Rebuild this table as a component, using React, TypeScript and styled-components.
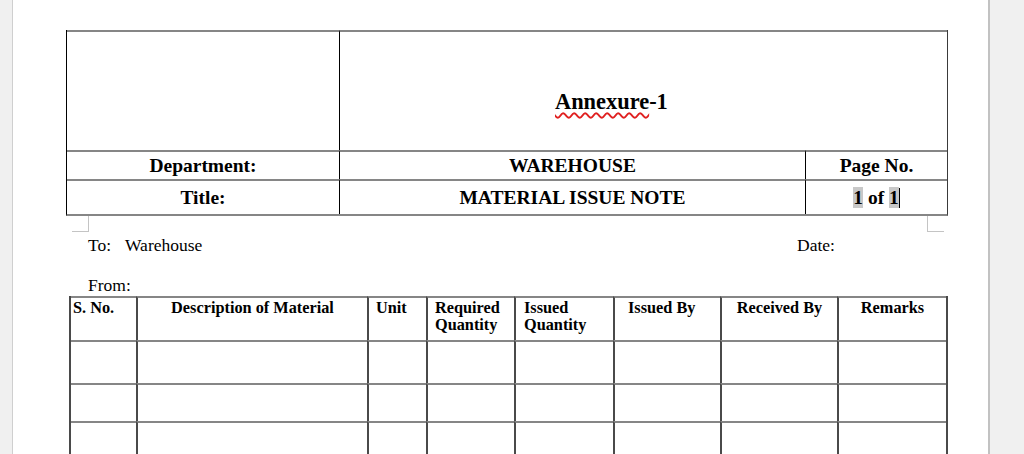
import React from "react";
import styled, { createGlobalStyle } from "styled-components";

const GlobalStyle = createGlobalStyle`
  html, body { margin: 0; padding: 0; height: 100%; overflow: hidden; background: #f0f0f0; }
  #root { height: 100%; }
`;

const Viewport = styled.div`
  display: flex;
  height: 454px;
  background: #f0f0f0;
  font-family: "Liberation Serif", "Times New Roman", serif;
  color: #000;
`;

const Page = styled.div`
  margin-left: 12px;
  width: 978px;
  box-sizing: border-box;
  border-left: 1px solid #cfcfcf;
  border-right: 2px solid #c2c2c2;
  background: #fff;
  padding-top: 30px;
  overflow: hidden;
  display: flex;
  flex-direction: column;
`;

const HeaderGrid = styled.div`
  margin-left: 53px;
  width: 882px;
  box-sizing: border-box;
  display: grid;
  grid-template-columns: 272px 466px 142px;
  grid-template-rows: 120px 29px 35px;
  border-left: 1px solid #000;
  border-right: 1px solid #3a3a3a;
  border-bottom: 2px solid #868686;
`;

const HeadCell = styled.div<{ $first?: boolean; $span?: number }>`
  box-sizing: border-box;
  grid-column: span ${(p) => p.$span ?? 1};
  border-top: 2px solid #868686;
  border-left: ${(p) => (p.$first ? "none" : "1px solid #000")};
  display: flex;
  align-items: center;
  justify-content: center;
  font-weight: bold;
  font-size: 19.5px;
  white-space: nowrap;
`;

const TitleCell = styled(HeadCell)`
  justify-content: flex-start;
  padding-left: 215px;
  padding-top: 22px;
  font-size: 22.4px;
`;

const Misspelled = styled.span`
  text-decoration: underline wavy #e02020;
  text-decoration-thickness: 1.5px;
  text-underline-offset: 3px;
  text-decoration-skip-ink: none;
`;

const Highlight = styled.span`
  background: #c8c8c8;
`;

const Caret = styled.span`
  display: inline-block;
  width: 1px;
  height: 20px;
  background: #000;
  vertical-align: -4px;
`;

const MarksRow = styled.div`
  display: flex;
  justify-content: space-between;
  align-items: flex-end;
  height: 17px;
  padding-left: 59px;
  padding-right: 44px;
`;

const CornerMark = styled.div<{ $side: "left" | "right" }>`
  width: 17px;
  height: 16px;
  box-sizing: border-box;
  border-bottom: 1px solid #c4c4c4;
  ${(p) => (p.$side === "left" ? "border-right: 1px solid #c4c4c4;" : "border-left: 1px solid #c4c4c4;")}
`;

const InfoLine = styled.div<{ $gapTop?: number }>`
  display: grid;
  grid-template-columns: 37px 672px auto;
  padding-left: 75px;
  margin-top: ${(p) => p.$gapTop ?? 0}px;
  font-size: 17.5px;
  line-height: 21px;
  height: 21px;
  white-space: nowrap;
`;

const ItemsGrid = styled.div`
  margin-left: 56px;
  width: 879px;
  box-sizing: border-box;
  display: grid;
  grid-template-columns: 65px 231px 59px 88px 99px 107px 117px 109px;
  grid-template-rows: 44px 43px 38px 43px 43px;
  border-left: 2px solid #4a4a4a;
  border-right: 2px solid #4a4a4a;
`;

const ItemCell = styled.div<{ $first?: boolean; $align?: "left" | "center"; $pad?: number }>`
  box-sizing: border-box;
  border-top: 2px solid #868686;
  border-left: ${(p) => (p.$first ? "none" : "2px solid #4a4a4a")};
  padding-left: ${(p) => p.$pad ?? 0}px;
  padding-top: 1px;
  text-align: ${(p) => p.$align ?? "center"};
  font-weight: bold;
  font-size: 16.3px;
  line-height: 17px;
  white-space: nowrap;
`;

const headers: { label: React.ReactNode; align: "left" | "center"; pad: number }[] = [
  { label: "S. No.", align: "left", pad: 2 },
  { label: "Description of Material", align: "center", pad: 0 },
  { label: "Unit", align: "left", pad: 7 },
  { label: <>Required<br />Quantity</>, align: "left", pad: 7 },
  { label: <>Issued<br />Quantity</>, align: "left", pad: 8 },
  { label: "Issued By", align: "left", pad: 13 },
  { label: "Received By", align: "center", pad: 0 },
  { label: "Remarks", align: "center", pad: 0 },
];

export default function App() {
  const bodyRows = [0, 1, 2, 3];
  return (
    <>
      <GlobalStyle />
      <Viewport>
        <Page>
          <HeaderGrid>
            <HeadCell $first />
            <TitleCell $span={2}>
              <span>
                <Misspelled>Annexure</Misspelled>-1
              </span>
            </TitleCell>
            <HeadCell $first>Department:</HeadCell>
            <HeadCell>WAREHOUSE</HeadCell>
            <HeadCell>Page No.</HeadCell>
            <HeadCell $first>Title:</HeadCell>
            <HeadCell>MATERIAL ISSUE NOTE</HeadCell>
            <HeadCell>
              <span>
                <Highlight>1</Highlight> of <Highlight>1</Highlight>
                <Caret />
              </span>
            </HeadCell>
          </HeaderGrid>
          <MarksRow>
            <CornerMark $side="left" />
            <CornerMark $side="right" />
          </MarksRow>
          <InfoLine $gapTop={3}>
            <span>To:</span>
            <span>Warehouse</span>
            <span>Date:</span>
          </InfoLine>
          <InfoLine $gapTop={19}>
            <span>From:</span>
          </InfoLine>
          <ItemsGrid>
            {headers.map((h, i) => (
              <ItemCell key={i} $first={i === 0} $align={h.align} $pad={h.pad}>
                {h.label}
              </ItemCell>
            ))}
            {bodyRows.map((r) =>
              headers.map((_, i) => <ItemCell key={`${r}-${i}`} $first={i === 0} />)
            )}
          </ItemsGrid>
        </Page>
      </Viewport>
    </>
  );
}
